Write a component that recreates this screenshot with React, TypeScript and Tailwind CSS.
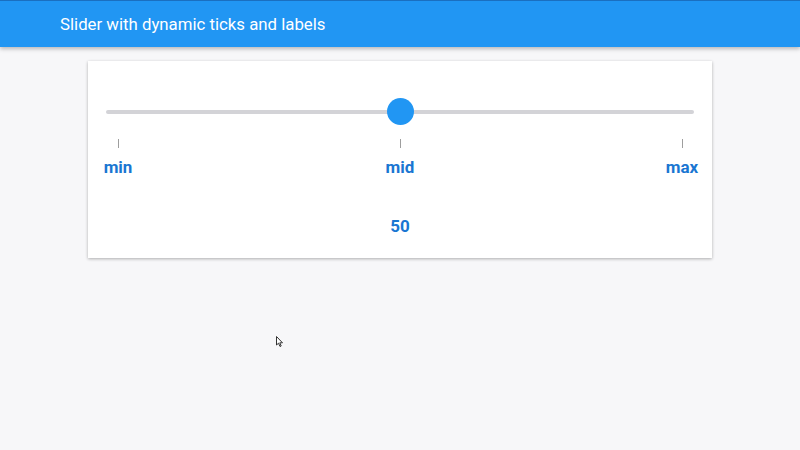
import React from "react";

export default function App() {
  return (
    <div className="w-[800px] h-[450px] bg-[#f7f7f9] relative overflow-hidden" style={{ fontFamily: "Roboto, 'Liberation Sans', sans-serif" }}>
      <header className="h-[47px] bg-[#2196f3] border-t border-[#1a6fc0] flex items-center pl-[60px] shadow-[0_2px_4px_rgba(0,0,0,0.25)] relative z-10">
        <span className="text-white text-[16.8px] leading-none">Slider with dynamic ticks and labels</span>
      </header>
      <div className="mt-[14px] mx-auto w-[624px] h-[197px] bg-white shadow-[0_1px_3px_rgba(0,0,0,0.3)] flex flex-col px-[18px]">
        <div className="mt-[37px] h-[27px] flex items-center relative">
          <div className="w-full h-[4px] bg-[#d3d3d7] rounded-full" />
          <div className="absolute left-[281px] top-0 w-[27px] h-[27px] rounded-full bg-[#2196f3]" />
        </div>
        <div className="mt-[14px] px-[12px] flex justify-between">
          {["min", "mid", "max"].map((l) => (
            <div key={l} className="w-0 flex flex-col items-center">
              <div className="w-px h-[9px] bg-[#9e9e9e]" />
              <div className="mt-[10px] text-[17px] font-bold text-[#1976d2] leading-[19px] whitespace-nowrap">{l}</div>
            </div>
          ))}
        </div>
        <div className="mt-[40px] text-center text-[17px] font-bold text-[#1976d2] leading-[19px]">50</div>
      </div>
      <svg className="absolute left-[276px] top-[336px]" width="8" height="12" viewBox="0 0 8 12">
        <path d="M0.5 0.5 L0.5 9 L2.5 7.2 L4 10.5 L5.2 10 L3.8 6.8 L6.5 6.8 Z" fill="#fff" stroke="#333" strokeWidth="1" />
      </svg>
    </div>
  );
}
